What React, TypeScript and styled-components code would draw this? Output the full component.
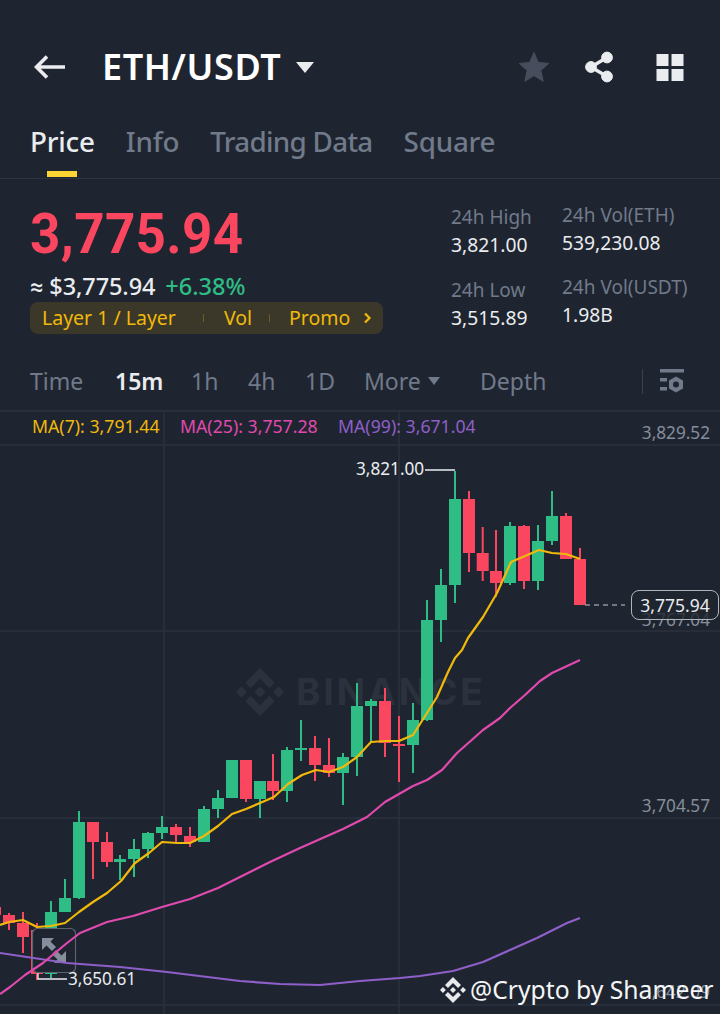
import React from 'react';
import styled, { createGlobalStyle } from 'styled-components';

const BG = '#1f2530';
const UP = '#2ebd85';
const DOWN = '#fb4660';
const FONT = '"Noto Sans", Roboto, sans-serif';
const NUM = 'Roboto, "Noto Sans", sans-serif';

const Global = createGlobalStyle`
  html, body { margin: 0; padding: 0; background: ${BG}; }
  * { box-sizing: border-box; }
`;

const Screen = styled.div`
  width: 720px; height: 1014px; overflow: hidden; background: ${BG};
  display: flex; flex-direction: column; font-family: ${FONT}; color: #eaecef;
`;

const Header = styled.header`
  display: flex; align-items: center; height: 54px; margin-top: 40px; padding: 0 35px 0 34px;
`;
const BackIcon = styled.svg`width: 32px; height: 26px; margin-right: 36px; flex: none;`;
const Title = styled.h1`
  margin: 0; font: 600 36px/54px ${FONT}; color: #fff; letter-spacing: 0.6px;
`;
const Caret = styled.span<{ $size: number; $color: string; $gap: number }>`
  display: inline-block; flex: none; margin-left: ${p => p.$gap}px;
  border-left: ${p => p.$size}px solid transparent; border-right: ${p => p.$size}px solid transparent;
  border-top: ${p => p.$size * 1.3}px solid ${p => p.$color};
`;
const HeaderActions = styled.div`
  margin-left: auto; display: flex; align-items: center; gap: 35px;
`;
const ActionIcon = styled.svg<{ $shift?: number }>`
  width: 30px; height: 32px; margin-left: ${p => p.$shift ?? 0}px;
`;

const Tabs = styled.nav`
  display: flex; gap: 31px; height: 85px; padding: 27px 30px 0; border-bottom: 1px solid #2e3441;
`;
const Tab = styled.div`display: flex; flex-direction: column; align-items: center;`;
const TabLabel = styled.span<{ $active?: boolean; $tracking?: number }>`
  font: 500 27.8px/40px ${FONT}; color: ${p => (p.$active ? '#eaecef' : '#707a8a')}; height: 50px;
  letter-spacing: ${p => p.$tracking ?? -0.2}px;
`;
const TabMark = styled.i`display: block; width: 30px; height: 6px; background: #fcd535;`;

const Quote = styled.section`display: flex; height: 173px; padding: 22px 0 0 30px;`;
const QuoteLeft = styled.div`width: 421px; display: flex; flex-direction: column; align-items: flex-start;`;
const LastPrice = styled.div`
  font: 700 56px/66px ${NUM}; color: ${DOWN}; letter-spacing: 0.4px; height: 71px;
  transform: scaleX(0.945); transform-origin: left center;
`;
const SubRow = styled.div`display: flex; gap: 10px; font: 500 23.5px/28px ${FONT}; height: 30px;`;
const Fiat = styled.span`color: #eaecef; letter-spacing: -0.1px;`;
const Change = styled.span`color: ${UP};`;
const TagBar = styled.div`
  display: flex; align-items: center; width: 353px; height: 32px; padding: 0 12px; background: #3c3829;
  border-radius: 8px; color: #f0b90b; font: 400 19.5px/32px ${FONT};
`;
const TagText = styled.span<{ $w: number }>`flex: none; width: ${p => p.$w}px; white-space: nowrap;`;
const TagSep = styled.i<{ $w: number }>`
  display: block; flex: none; width: 1px; height: 8px; background: #6d5d1e; margin-right: ${p => p.$w}px;
`;
const Chevron = styled.svg`width: 9px; height: 14px; flex: none;`;
const Stats = styled.div`display: flex;`;
const StatCol = styled.div<{ $w: number; $top: number }>`
  width: ${p => p.$w}px; margin-top: ${p => p.$top}px; display: flex; flex-direction: column;
`;
const StatLabel = styled.div`font: 400 19px/28px ${FONT}; color: #707a8a; white-space: nowrap;`;
const StatValue = styled.div<{ $gap: number }>`
  font: 400 19.3px/28px ${FONT}; color: #eaecef; margin-bottom: ${p => p.$gap}px; white-space: nowrap;
`;

const Intervals = styled.div`
  display: flex; align-items: center; height: 60px; padding: 0 36px 0 30px;
  border-bottom: 2px solid #2a303b; font: 400 23px/30px ${FONT}; color: #707a8a;
`;
const Interval = styled.span<{ $active?: boolean; $w: number; $lead?: number }>`
  flex: none; width: ${p => p.$w}px; white-space: nowrap; margin-left: ${p => p.$lead ?? 0}px;
  color: ${p => (p.$active ? '#eaecef' : '#707a8a')}; font-weight: ${p => (p.$active ? 600 : 400)};
`;
const Divider = styled.i`display: block; width: 1px; height: 25px; background: #3a414e; margin: 0 17px 0 auto;`;
const SettingsIcon = styled.svg`width: 24px; height: 24px; flex: none;`;

const Chart = styled.div`position: relative; flex: 1;`;
const ChartSvg = styled.svg`position: absolute; left: 0; top: 0; width: 720px; height: 602px;`;
const Legend = styled.div`
  position: absolute; left: 32px; top: 2px; display: flex; font: 400 17.7px/24px ${FONT};
`;
const LegendItem = styled.span<{ $color: string; $w: number }>`
  color: ${p => p.$color}; width: ${p => p.$w}px; white-space: nowrap;
`;
const AxisLabel = styled.span<{ $y: number }>`
  position: absolute; right: 10px; top: ${p => p.$y}px; font: 400 17.2px/20px ${FONT}; color: #848e9c;
`;
const PriceTag = styled.div`
  position: absolute; left: 631px; top: 178px; width: 88px; height: 30px; border: 1.5px solid #b0b4bb;
  border-radius: 8px; font: 400 17.5px/28px ${FONT}; color: #eaecef; text-align: center; background: rgba(31,37,48,.8);
`;
const Extreme = styled.span<{ $x: number; $y: number }>`
  position: absolute; left: ${p => p.$x}px; top: ${p => p.$y}px; font: 400 17.2px/20px ${FONT}; color: #eaecef;
`;
const Watermark = styled.div`
  position: absolute; left: 236px; top: 256px; display: flex; align-items: center; gap: 12px; color: #2c323d;
  font: 700 37px/48px Inter, sans-serif; letter-spacing: 3px;
`;
const MarkIcon = styled.svg<{ $s: number }>`width: ${p => p.$s}px; height: ${p => p.$s}px; flex: none;`;
const Credit = styled.div`
  position: absolute; left: 440px; top: 561px; display: flex; align-items: center; gap: 4px; color: #f4f5f6;
  font: 400 24.7px/34px "Noto Sans", sans-serif; white-space: nowrap;
`;

const LogoPaths = () => (
  <>
    <path d="M38.73 53.2 63.3 28.63l24.59 24.58 14.3-14.3L63.3 0 24.43 38.91z" />
    <path d="M0 63.31 14.3 49l14.31 14.31-14.31 14.3z" />
    <path d="M38.73 73.41 63.3 97.99l24.59-24.58 14.31 14.29-38.9 38.91-38.88-38.9z" />
    <path d="M98 63.31 112.3 49l14.31 14.3-14.31 14.32z" />
    <path d="M77.83 63.3 63.3 48.76 48.78 63.27 63.3 77.8z" />
  </>
);

// [x, wickTop, wickBottom, bodyTop, bodyBottom, up]
type Candle = [number, number, number, number, number, 0 | 1];
const candles: Candle[] = [
  [580, 548, 605, 559, 605, 0], [566, 513, 559, 516, 559, 0], [552, 491, 545, 516, 541, 1],
  [538, 525, 590, 541, 581, 1], [524, 525, 589, 526, 581, 0], [510, 522, 585, 526, 583, 1],
  [496, 530, 597, 571, 583, 0], [482.7, 527, 581, 553, 571, 0], [469, 491, 572, 499, 553, 0],
  [455, 471, 603, 499, 585, 1], [441, 569, 642, 585, 620, 1], [427, 600, 721, 620, 720, 1],
  [413, 703, 773, 720, 745, 1], [399, 716, 782, 744, 746, 0], [385, 688, 757, 701, 743, 0],
  [371, 699, 743, 701, 706, 1], [357, 683, 776, 706, 757, 1], [343, 753, 805, 757, 773, 1],
  [329, 738, 777, 765, 773, 0], [315, 736, 781, 748, 765, 0], [301, 720, 761, 748, 750, 1],
  [287, 747, 802, 750, 791, 1], [273, 754, 800, 781, 791, 0], [260, 781, 818, 781, 799, 1],
  [246, 760, 802, 760, 799, 0], [232, 760, 798, 760, 798, 1], [218, 790, 818, 798, 809, 1],
  [204, 806, 842, 809, 842, 1], [190, 827, 847, 836, 842, 0], [176, 824, 843, 827, 835, 0],
  [162, 816, 839, 827, 833, 1], [148, 832, 858, 833, 849, 1], [134, 839, 877, 849, 859, 1],
  [120, 855, 880, 859, 862, 1], [107, 832, 867, 842, 862, 0], [93, 822, 879, 822, 842, 0],
  [79, 811, 899, 822, 898, 1], [65, 879, 912, 898, 912, 1], [51, 901, 978, 912, 974, 1],
  [37, 923, 980, 930, 974, 0], [23, 912, 953, 923, 937, 0], [9, 913, 930, 915, 923, 0],
  [-5, 905, 920, 907, 915, 0],
];

const ma7 = '0,925 9,922 23,920 37,927 51,926 65,923 79,912 93,902 107,893 121,881 135,863 149,853 162,842 177,843 190,843 204,836 218,826 232,814 246,809 260,803 274,797 288,784 302,775 316,770 329,772 343,767 357,757 371,742 385,741 399,741 413,735 427,713 437,697 448,672 455,658 462,650 468,638 483,617 497,593 511,562 525,556 539,550 552,553 566,554 580,559';
const ma25 = '0,994 10,987 25,975 43,963 67,943 80,933 107,922 133,916 162,907 190,899 218,888 240,877 270,862 300,848 343,829 367,817 385,802 399,794 413,786 427,780 442,770 457,753 483,730 500,718 510,708 525,695 540,681 552,673 565,667 580,660';
const ma99 = '0,953 67,963 120,967 167,972 240,981 280,984 320,985 360,981 400,978 420,976 453,971 483,962 510,950 537,938 567,923 580,918';

export default function App() {
  return (
    <Screen>
      <Global />
      <Header>
        <BackIcon viewBox="0 0 32 26" fill="none" stroke="#eaecef" strokeWidth="3.6">
          <path d="M31 13H3M13 2.500 2.500 13 13 23.500" />
        </BackIcon>
        <Title>ETH/USDT</Title>
        <Caret $size={9} $color="#eaecef" $gap={15} />
        <HeaderActions>
          <ActionIcon viewBox="0 0 30 32" fill="#474d5c">
            <path d="M15 1.500l4.300 9.900 10.400 1-7.900 7 2.400 10.900L15 24.600l-9.200 5.700 2.400-10.900-7.900-7 10.400-1z" strokeLinejoin="round" stroke="#474d5c" />
          </ActionIcon>
          <ActionIcon viewBox="0 0 30 32" fill="#eaecef" stroke="#eaecef">
            <circle cx="7" cy="16" r="5.400" />
            <circle cx="23" cy="6.500" r="5.400" />
            <circle cx="23" cy="25.500" r="5.400" />
            <path d="M7 16 23 6.500M7 16l16 9.500" strokeWidth="3.400" fill="none" />
          </ActionIcon>
          <ActionIcon $shift={6} viewBox="0 0 30 32" fill="#eaecef">
            <path d="M1.500 3h12v12h-12zM16.500 3h12v12h-12zM1.500 18h12v12h-12zM16.500 18h12v12h-12z" />
          </ActionIcon>
        </HeaderActions>
      </Header>

      <Tabs>
        <Tab><TabLabel $active>Price</TabLabel><TabMark /></Tab>
        <Tab><TabLabel>Info</TabLabel></Tab>
        <Tab><TabLabel $tracking={-0.7}>Trading Data</TabLabel></Tab>
        <Tab><TabLabel>Square</TabLabel></Tab>
      </Tabs>

      <Quote>
        <QuoteLeft>
          <LastPrice>3,775.94</LastPrice>
          <SubRow>
            <Fiat>≈ $3,775.94</Fiat>
            <Change>+6.38%</Change>
          </SubRow>
          <TagBar>
            <TagText $w={161}>Layer 1 / Layer</TagText>
            <TagSep $w={20} />
            <TagText $w={45}>Vol</TagText>
            <TagSep $w={19} />
            <TagText $w={74}>Promo</TagText>
            <Chevron viewBox="0 0 9 14" fill="none" stroke="#f0b90b" strokeWidth="2.200"><path d="M2 2.500l4.500 4.500L2 11.500" /></Chevron>
          </TagBar>
        </QuoteLeft>
        <Stats>
          <StatCol $w={111} $top={2}>
            <StatLabel>24h High</StatLabel>
            <StatValue $gap={17}>3,821.00</StatValue>
            <StatLabel>24h Low</StatLabel>
            <StatValue $gap={0}>3,515.89</StatValue>
          </StatCol>
          <StatCol $w={150} $top={0}>
            <StatLabel>24h Vol(ETH)</StatLabel>
            <StatValue $gap={16}>539,230.08</StatValue>
            <StatLabel>24h Vol(USDT)</StatLabel>
            <StatValue $gap={0}>1.98B</StatValue>
          </StatCol>
        </Stats>
      </Quote>

      <Intervals>
        <Interval $w={85}>Time</Interval>
        <Interval $w={76} $active>15m</Interval>
        <Interval $w={57}>1h</Interval>
        <Interval $w={57}>4h</Interval>
        <Interval $w={59}>1D</Interval>
        <Interval $w={64}>More</Interval>
        <Caret $size={6.5} $color="#707a8a" $gap={0} />
        <Interval $w={64} $lead={40}>Depth</Interval>
        <Divider />
        <SettingsIcon viewBox="0 0 24 24" fill="#707a8a">
          <path d="M0 0h24v3.500H0zM0 9h7v3.500H0zM0 18h7v3.500H0z" />
          <path fillRule="evenodd" d="M16 7.500l7 4v8l-7 4-7-4v-8zm0 5a3 3 0 1 0 0 6 3 3 0 0 0 0-6z" />
        </SettingsIcon>
      </Intervals>

      <Chart>
        <Watermark>
          <MarkIcon $s={48} viewBox="0 0 126.61 126.61" fill="currentColor"><LogoPaths /></MarkIcon>
          BINANCE
        </Watermark>
        <ChartSvg viewBox="0 412 720 602">
          <g stroke="#2b313c" strokeWidth="1.500">
            <path d="M0 445H720M0 631H720M0 818H720M0 1005H720M164 412V1014M399 412V1014" />
          </g>
          {candles.map(([x, wt, wb, bt, bb, up]) => (
            <g key={x} fill={up ? UP : DOWN}>
              <rect x={x - 1} y={wt} width={2} height={wb - wt} />
              <rect x={x - 6} y={bt} width={12} height={Math.max(bb - bt, 2)} />
            </g>
          ))}
          <rect x="32.500" y="928.500" width="43" height="44" rx="5" fill={BG} stroke="#5c6370" strokeWidth="1.200" />
          <path d="M42 938h12l-3.500 3.500 5.500 5.500-4 4-5.500-5.500L42 950zM66 963H54l3.500-3.500-5.500-5.500 4-4 5.500 5.500L66 951z" fill="#848e9c" />
          <path d="M38 973v6h29M425 470h30" stroke="#eaecef" strokeWidth="1.300" fill="none" />
          <path d="M585 605h40" stroke="#8d939d" strokeWidth="1.500" strokeDasharray="5 4" />
          <polyline points={ma99} fill="none" stroke="#8e5fc9" strokeWidth="2.200" strokeLinejoin="round" />
          <polyline points={ma25} fill="none" stroke="#e04aae" strokeWidth="2.200" strokeLinejoin="round" />
          <polyline points={ma7} fill="none" stroke="#f0b90b" strokeWidth="2.200" strokeLinejoin="round" />
        </ChartSvg>
        <Legend>
          <LegendItem $color="#f0b90b" $w={148}>MA(7): 3,791.44</LegendItem>
          <LegendItem $color="#e04aae" $w={158}>MA(25): 3,757.28</LegendItem>
          <LegendItem $color="#8e5fc9" $w={160}>MA(99): 3,671.04</LegendItem>
        </Legend>
        <AxisLabel $y={11}>3,829.52</AxisLabel>
        <AxisLabel $y={198}>3,767.04</AxisLabel>
        <AxisLabel $y={384}>3,704.57</AxisLabel>
        <AxisLabel $y={570}>3,642.09</AxisLabel>
        <PriceTag>3,775.94</PriceTag>
        <Extreme $x={356} $y={47}>3,821.00</Extreme>
        <Extreme $x={68} $y={557}>3,650.61</Extreme>
        <Credit>
          <MarkIcon $s={26} viewBox="0 0 126.61 126.61" fill="#e8e9ea"><LogoPaths /></MarkIcon>
          @Crypto by Shameer
        </Credit>
      </Chart>
    </Screen>
  );
}
